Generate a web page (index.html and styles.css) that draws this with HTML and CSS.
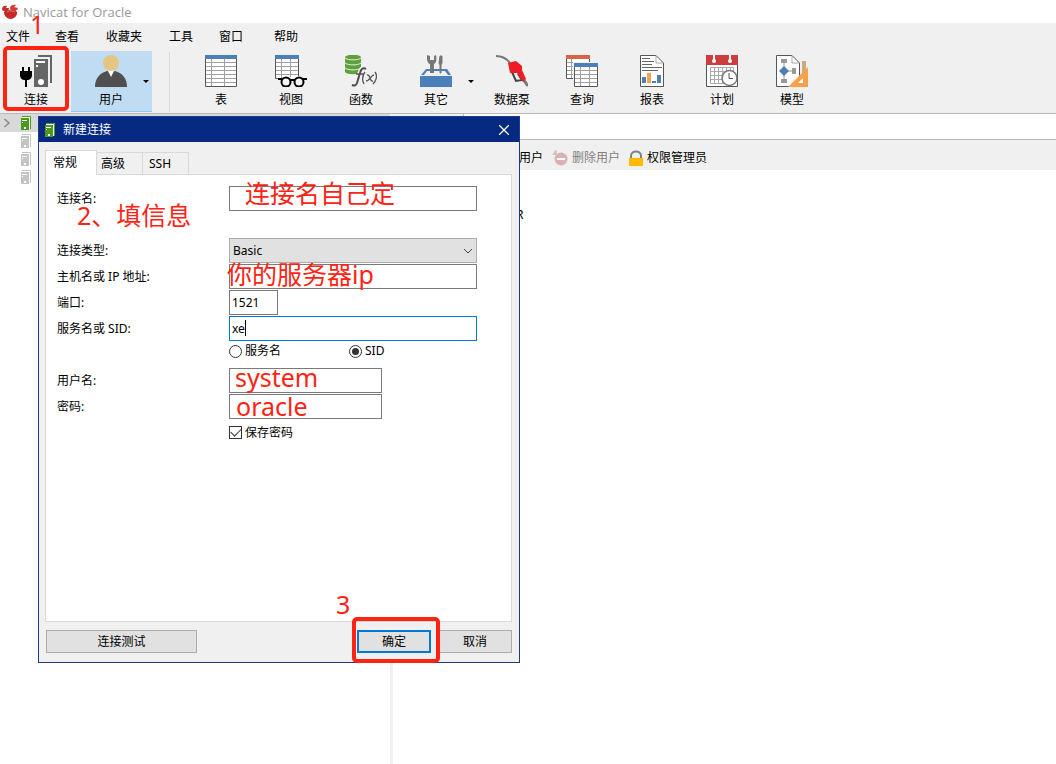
FILE: index.html
```html
<!DOCTYPE html>
<html lang="zh-CN">
<head>
  <meta charset="UTF-8">
  <meta name="viewport" content="width=device-width, initial-scale=1.0">
  <title>Navicat for Oracle</title>
  <link rel="stylesheet" href="styles.css">
</head>
<body>

<svg class="defs" width="0" height="0">
  <symbol id="server" viewBox="0 0 10 14">
    <path d="M1 0H10V13H8V14H0V2H1Z" fill="#fff"/>
    <path d="M1 .5H9.5V13" fill="none" stroke="currentColor"/>
    <path d="M0 2H8V14H0Z" fill="currentColor"/>
    <path d="M1 4.5H6M1 6.500H2" stroke="#fff"/>
    <path d="M3 11H5V13H3Z" fill="#fff"/>
  </symbol>
</svg>

<header class="titlebar">
  <svg width="16" height="16" viewBox="0 0 16 16">
    <path d="M0 5C0 2 3 1 5 2L4 4L7 4C7 7 4 8 2 7C1 7 0 6 0 5Z" fill="#c92c2c"/>
    <path d="M8 4C8 1 12 0 14 1L12 3L16 4C15 7 12 8 9 7Z" fill="#d53a36"/>
    <path d="M2 8C5 5 12 5 15 8C16 11 12 15 9 15C5 15 2 12 2 8Z" fill="#c62828"/>
    <path d="M5 8C8 6 11 7 13 8" fill="none" stroke="#e88078"/>
  </svg>
  <span>Navicat for Oracle</span>
</header>

<nav class="menu">
  <button>文件</button>
  <button>查看</button>
  <button>收藏夹</button>
  <button>工具</button>
  <button>窗口</button>
  <button>帮助</button>
</nav>

<div class="toolbar">
  <button class="tool">
    <svg width="32" height="32" viewBox="0 0 32 32">
      <path d="M2 12H4V16H8V12H10V16H12V20C12 23 10 25 7 25V32H5V25C2 25 0 23 0 20V16H2Z" fill="#000"/>
      <path d="M14 4H28V32H14Z" fill="#666"/>
      <path d="M18 1H31V28" fill="none" stroke="#666" stroke-width="2"/>
      <path d="M16 7H25M16 11H18" stroke="#fff" stroke-width="2"/>
      <circle cx="21" cy="27" r="3" fill="#fff"/>
    </svg>
    <span>连接</span>
  </button>
  <button class="tool split active">
    <svg width="32" height="32" viewBox="0 0 32 32">
      <path d="M0 32C0 23 5 18 12 16H20C27 18 32 23 32 32Z" fill="#505050"/>
      <path d="M12 14L16 22L20 14Z" fill="#fff"/>
      <circle cx="16" cy="8" r="8" fill="#e5c583"/>
    </svg>
    <span>用户</span>
  </button>
  <div class="separator"></div>
  <button class="tool">
    <svg width="32" height="32" viewBox="0 0 32 32">
      <path d="M.5 3.5H31.5V31.500H.5Z" fill="#fff" stroke="#555"/>
      <path d="M1 7.500H31M1 11.500H31M1 15.500H31M1 19.500H31M1 23.500H31M1 27.500H31M6.500 4V31M19.500 4V31" stroke="#a0a0a0"/>
      <path d="M0 0H32V4H0Z" fill="#4a7fb8"/>
    </svg>
    <span>表</span>
  </button>
  <button class="tool">
    <svg width="32" height="32" viewBox="0 0 32 32">
      <path d="M.5 3.500H23.500V23.500H.5Z" fill="#fff"/>
      <path d="M1 7.500H23M1 11.500H23M1 15.500H23M1 19.500H23M6.500 4V23M15.500 4V22" stroke="#a0a0a0"/>
      <path d="M.5 3V23.500H3M23.500 3V21" fill="none" stroke="#555"/>
      <path d="M0 0H24V4H0Z" fill="#4a7fb8"/>
      <path d="M3 24H7M15 25H20M28 24H32" stroke="#000" stroke-width="2"/>
      <circle cx="11" cy="27" r="4.500" fill="#f5f5f5" stroke="#000" stroke-width="2"/>
      <circle cx="24" cy="27" r="4.500" fill="#f5f5f5" stroke="#000" stroke-width="2"/>
    </svg>
    <span>视图</span>
  </button>
  <button class="tool">
    <svg width="32" height="32" viewBox="0 0 32 32">
      <path d="M0 2C2 -1 14 -1 16 2V17C14 20 2 20 0 17Z" fill="#5f9f3e"/>
      <path d="M0 3C3 5.500 13 5.500 16 3M0 8C3 10.500 13 10.500 16 8M0 13C3 15.500 13 15.500 16 13" fill="none" stroke="#e6f1df"/>
      <path d="M21 14C18 12 16 14 15 18L12 28C11 31 9 31 7 30" fill="none" stroke="#f0f0f0" stroke-width="5"/>
      <path d="M21 14C18 12 16 14 15 18L12 28C11 31 9 31 7 30" fill="none" stroke="#4c4c4c" stroke-width="2"/>
      <path d="M11 19H19M20 17C17 21 17 26 19 29M30 17C33 21 31 26 28 29M22 20C26 19 24 27 28 26M29 20C26 20 25 26 21 26" fill="none" stroke="#555" stroke-width="1.300"/>
    </svg>
    <span>函数</span>
  </button>
  <button class="tool split">
    <svg width="32" height="32" viewBox="0 0 32 32">
      <path d="M6 14H27L31 20H1Z" fill="#4a7fb8"/>
      <path d="M7 16H25L28 20H4Z" fill="#f0f0f0"/>
      <path d="M7 0V4C7 7 9 9 10 9V18H14V9C16 8 17 6 16 0L14 1V5H10V1Z" fill="#777"/>
      <path d="M20 1H22V8L21 10V18H20V10L19 8Z" fill="#777" stroke="#777"/>
      <path d="M0 21H32V32H0Z" fill="#4a7fb8"/>
    </svg>
    <span>其它</span>
  </button>
  <button class="tool">
    <svg width="32" height="32" viewBox="0 0 32 32">
      <path d="M0 1C7 1 11 4 14 8" fill="none" stroke="#777" stroke-width="2"/>
      <path d="M27 24L32 31" stroke="#777" stroke-width="3"/>
      <path d="M16 17L20 26L26 25L22 19" fill="none" stroke="#444" stroke-width="2"/>
      <path d="M12 8L20 6L26 11V15L30 24L27 27L21 18L14 18Z" fill="#ee1c24"/>
    </svg>
    <span>数据泵</span>
  </button>
  <button class="tool">
    <svg width="32" height="32" viewBox="0 0 32 32">
      <path d="M.5 3.500H23.500V23.500H.5Z" fill="#fff" stroke="#555"/>
      <path d="M1 7.500H23M1 11.500H23M1 15.500H23M1 19.500H23M5.500 4V23" stroke="#a0a0a0"/>
      <path d="M0 0H24V4H0Z" fill="#d96545"/>
      <path d="M7 7H32V32H7Z" fill="#f0f0f0"/>
      <path d="M8.500 11.500H31.500V31.500H8.500Z" fill="#fff" stroke="#555"/>
      <path d="M9 15.500H31M9 19.500H31M9 23.500H31M9 27.500H31M14.500 12V31M23.500 12V31" stroke="#a0a0a0"/>
      <path d="M8 8H32V12H8Z" fill="#4a7fb8"/>
    </svg>
    <span>查询</span>
  </button>
  <button class="tool">
    <svg width="32" height="32" viewBox="0 0 32 32">
      <path d="M4.500 .5H20L27.500 8V31.500H4.500Z" fill="#fff" stroke="#555"/>
      <path d="M20 .5V8H27.500" fill="none" stroke="#aaa"/>
      <path d="M6 3.500H14M6 6.500H18M6 9.500H16M6 12.500H26M6 15.500H22" stroke="#666"/>
      <path d="M6 22H10V28H6Z" fill="#4a7fb8"/>
      <path d="M11 18H15V28H11Z" fill="#f6a04c"/>
      <path d="M16 26H20V28H16ZM21 20H25V28H21Z" fill="#4a7fb8"/>
    </svg>
    <span>报表</span>
  </button>
  <button class="tool">
    <svg width="32" height="32" viewBox="0 0 32 32">
      <path d="M.5 1.500H31.500V31.500H.5Z" fill="#fff" stroke="#555"/>
      <path d="M0 0H32V10H0Z" fill="#cd3d3f"/>
      <path d="M8 0V5M24 0V5" stroke="#fff" stroke-width="2"/>
      <circle cx="8" cy="6" r="2" fill="#fff"/>
      <circle cx="24" cy="6" r="2" fill="#fff"/>
      <path d="M4.500 12.500H27.500V28.500H4.500ZM4 16.500H28M4 20.500H28M4 24.500H28M8.500 12V29M12.500 12V29M16.500 12V29M20.500 12V29M24.500 12V29" fill="none" stroke="#aaa"/>
      <circle cx="23.500" cy="23" r="7.500" fill="#fff" stroke="#777" stroke-width="1.500"/>
      <path d="M23 18V23.500H27" fill="none" stroke="#555"/>
    </svg>
    <span>计划</span>
  </button>
  <button class="tool">
    <svg width="32" height="32" viewBox="0 0 32 32">
      <path d="M.5 .5H16L23.500 8V31.500H.5Z" fill="#fff" stroke="#555"/>
      <path d="M16 .5V8H23.500" fill="none" stroke="#aaa"/>
      <path d="M5 4H11V8H5ZM16 13H20V19H16ZM5 24H11V28H5Z" fill="#999"/>
      <path d="M8 8V24M8 16H16" stroke="#999"/>
      <path d="M8 11L13 16L8 21L3 16Z" fill="#4a7fb8"/>
      <path d="M26 6H30V32H26Z" fill="#c9ab78"/>
      <path d="M32 12V32H12Z" fill="#f9a04a"/>
      <path d="M27 23V28H22Z" fill="#fff"/>
    </svg>
    <span>模型</span>
  </button>
</div>

<main class="workspace">
  <aside class="sidebar">
    <ul class="tree">
      <li class="selected">
        <svg class="expander" width="8" height="10" viewBox="0 0 8 10"><path d="M1.500 1L6 5L1.500 9" fill="none" stroke="#888" stroke-width="1.500"/></svg>
        <svg class="node" width="10" height="14"><use href="#server"/></svg>
      </li>
      <li><svg class="node" width="10" height="14"><use href="#server"/></svg></li>
      <li><svg class="node" width="10" height="14"><use href="#server"/></svg></li>
      <li><svg class="node" width="10" height="14"><use href="#server"/></svg></li>
    </ul>
  </aside>
  <section class="content">
    <div class="tabstrip"><div class="tabstrip-tab"></div></div>
    <div class="actions">
      <button>用户</button>
      <button disabled>
        <svg width="16" height="16" viewBox="0 0 16 16">
          <path d="M0 5L2 2L3 0L5 1V5Z" fill="#ccc8bd"/>
          <circle cx="9" cy="9" r="6.500" fill="#d9b3b3"/>
          <path d="M5 9H13" stroke="#fff" stroke-width="2"/>
        </svg>
        删除用户
      </button>
      <button>
        <svg width="14" height="16" viewBox="0 0 14 16">
          <path d="M2 8V6C2 0 12 0 12 6V8" fill="none" stroke="#808080" stroke-width="2"/>
          <path d="M0 8H14V16H0Z" fill="#ffb900"/>
        </svg>
        权限管理员
      </button>
    </div>
    <div class="objects">R</div>
  </section>
</main>

<div class="dialog" role="dialog" aria-labelledby="dialog-title">
  <div class="dialog-title">
    <svg width="10" height="14"><use href="#server"/></svg>
    <span id="dialog-title">新建连接</span>
    <button class="close" aria-label="关闭">
      <svg width="10" height="10" viewBox="0 0 10 10"><path d="M0 0L10 10M10 0L0 10" stroke="#fff" stroke-width="1.300"/></svg>
    </button>
  </div>
  <form class="dialog-body">
    <div class="tabs" role="tablist">
      <button type="button" class="tab current" role="tab">常规</button>
      <button type="button" class="tab" role="tab">高级</button>
      <button type="button" class="tab" role="tab">SSH</button>
    </div>
    <div class="panel">
      <div class="row">
        <label for="name">连接名:</label>
        <input type="text" id="name" class="field">
      </div>
      <div class="row"></div>
      <div class="row">
        <label for="type">连接类型:</label>
        <div class="select">
          <select id="type"><option>Basic</option></select>
          <svg class="arrow" width="10" height="6" viewBox="0 0 10 6"><path d="M1 1L5 5L9 1" fill="none" stroke="#444"/></svg>
        </div>
      </div>
      <div class="row">
        <label for="host">主机名或 IP 地址:</label>
        <input type="text" id="host" class="field">
      </div>
      <div class="row">
        <label for="port">端口:</label>
        <input type="text" id="port" class="field port" value="1521">
      </div>
      <div class="row">
        <label for="sid">服务名或 SID:</label>
        <div class="focused">
          <input type="text" id="sid" class="field" value="xe">
          <span class="caret"></span>
        </div>
      </div>
      <div class="row options">
        <label class="option"><input type="radio" name="kind">服务名</label>
        <label class="option"><input type="radio" name="kind" checked>SID</label>
      </div>
      <div class="row">
        <label for="user">用户名:</label>
        <input type="text" id="user" class="field short">
      </div>
      <div class="row">
        <label for="password">密码:</label>
        <input type="password" id="password" class="field short">
      </div>
      <div class="row">
        <label class="option save"><input type="checkbox" checked>保存密码</label>
      </div>
    </div>
    <div class="buttons">
      <button type="button" class="btn test">连接测试</button>
      <button type="button" class="btn default">确定</button>
      <button type="button" class="btn">取消</button>
    </div>
  </form>
</div>

<!-- tutorial notes on top of the window -->
<div class="note box box-connect"></div>
<div class="note box box-ok"></div>
<div class="note note-1">1</div>
<div class="note note-2">2、填信息</div>
<div class="note note-3">3</div>
<div class="note note-name">连接名自己定</div>
<div class="note note-host">你的服务器ip</div>
<div class="note note-user">system</div>
<div class="note note-password">oracle</div>

</body>
</html>
```
FILE: styles.css
```css
* {
  box-sizing: border-box;
}

body {
  margin: 0;
  min-height: 100vh;
  display: flex;
  flex-direction: column;
  position: relative;
  background-color: #fff;
  color: #000;
  font-family: "Noto Sans", "Noto Sans CJK SC", sans-serif;
  font-size: 12px;
  line-height: 16px;
}

button,
input,
select {
  font: inherit;
  color: inherit;
}

button {
  padding: 0;
  border: none;
  background: none;
}

svg {
  display: block;
  flex: none;
}

.defs {
  position: absolute;
}

.titlebar {
  display: flex;
  align-items: center;
  gap: 5px;
  height: 23px;
  padding-left: 2px;
  color: #999;
  font-family: "Open Sans", sans-serif;
  font-size: 13px;
}

.menu {
  display: grid;
  grid-template-columns: 49px 51px 63px 50px 55px auto;
  height: 25px;
  padding: 2px 0 0 6px;
  background-color: #f0f0f0;
}

.menu button {
  text-align: left;
}

/* main toolbar */
.toolbar {
  display: flex;
  height: 66px;
  padding: 3px 0 1px 1px;
  background-color: #f0f0f0;
  border-bottom: 1px solid #b9b9b9;
}

.tool {
  display: flex;
  flex-direction: column;
  align-items: center;
  gap: 5px;
  width: 70px;
  padding-top: 4px;
}

.tool.split {
  position: relative;
  width: 81px;
  padding-right: 1px;
}

.tool.split::after {
  content: "";
  position: absolute;
  right: 3px;
  top: 29px;
  border: 3px solid transparent;
  border-top-color: #000;
  border-bottom: none;
}

.tool.active {
  background-color: #c0dcf3;
  border-bottom: 1px solid #90c8f6;
}

.separator {
  width: 34px;
  padding: 1px 0 0 17px;
}

.separator::before {
  content: "";
  display: block;
  width: 1px;
  height: 100%;
  background-color: #d9d9d9;
}

.workspace {
  flex: 1;
  display: grid;
  grid-template-columns: 393px 1fr;
}

.sidebar {
  border-right: 3px solid #f0f0f0;
}

.tree {
  margin: 0;
  padding: 0;
  list-style: none;
}

.tree li {
  display: flex;
  align-items: center;
  justify-content: flex-end;
  gap: 10px;
  height: 18px;
  padding-right: 359px;
}

.tree .selected {
  background-color: #d9d9d9;
}

.node {
  color: #c4c4c4;
}

.selected .node,
.dialog-title svg {
  color: #4a9a1c;
}

.tabstrip {
  height: 26px;
  border-bottom: 1px solid #b9b9b9;
}

.tabstrip-tab {
  width: 71px;
  height: 25px;
  background-color: #f0f0f0;
  border-right: 1px solid #b9b9b9;
}

.actions {
  display: flex;
  align-items: center;
  gap: 9px;
  height: 30px;
  padding: 5px 0 0 126px;
  background-color: #f0f0f0;
}

.actions button {
  display: flex;
  align-items: center;
  gap: 4px;
}

.actions button:disabled {
  color: #808080;
}

.objects {
  padding: 37px 0 0 123px;
}

/* new connection dialog */
.dialog {
  position: absolute;
  left: 38px;
  top: 116px;
  width: 482px;
  background-color: #f0f0f0;
  border: 1px solid #1c3a86;
}

.dialog-title {
  display: flex;
  align-items: center;
  gap: 8px;
  height: 25px;
  padding: 0 10px 0 6px;
  background-color: #062a82;
  color: #fff;
}

.dialog-title .close {
  margin-left: auto;
}

.dialog-body {
  padding: 8px 7px 9px 6px;
}

.tabs {
  display: flex;
  align-items: flex-end;
  height: 24px;
}

.tab {
  width: 46px;
  height: 22px;
  padding-left: 4px;
  text-align: left;
  border: 1px solid #d9d9d9;
  border-left: none;
  border-bottom: none;
}

.tab:last-child {
  padding-left: 6px;
}

.tab.current {
  position: relative;
  width: 52px;
  height: 25px;
  margin-bottom: -1px;
  padding-left: 7px;
  background-color: #fff;
  border-left: 1px solid #d9d9d9;
}

.panel {
  display: grid;
  grid-auto-rows: 25px;
  gap: 1px;
  min-height: 448px;
  padding: 11px;
  align-content: start;
  background-color: #fff;
  border: 1px solid #d9d9d9;
}

.row {
  display: grid;
  grid-template-columns: 172px 248px;
  align-items: center;
}

.field,
.select select {
  width: 100%;
  height: 25px;
  padding: 0 3px;
  background-color: #fff;
  border: 1px solid #7a7a7a;
  border-radius: 0;
  outline: none;
}

.field {
  padding: 0 2px;
}

.port {
  width: 49px;
}

.short {
  width: 153px;
}

.select,
.focused {
  position: relative;
}

.select select {
  appearance: none;
  background-color: #e1e1e1;
  border-color: #adadad;
}

.select .arrow {
  position: absolute;
  right: 4px;
  top: 10px;
  pointer-events: none;
}

.focused .field {
  border-color: #0078d7;
}

.caret {
  position: absolute;
  left: 16px;
  top: 4px;
  width: 1px;
  height: 16px;
  background-color: #000;
}

.options {
  grid-template-columns: 120px 1fr;
  padding-left: 172px;
  align-items: start;
}

.option {
  display: flex;
  align-items: center;
  gap: 3px;
  line-height: 18px;
}

.save {
  grid-column: 2;
}

.option input {
  appearance: none;
  display: grid;
  place-items: center;
  width: 13px;
  height: 13px;
  margin: 0;
  background-color: #fff;
  border: 1px solid #333;
}

.option input[type="radio"] {
  border-radius: 50%;
}

.option input[type="radio"]:checked::before {
  content: "";
  width: 7px;
  height: 7px;
  border-radius: 50%;
  background-color: #333;
}

.option input[type="checkbox"]:checked::before {
  content: "";
  width: 9px;
  height: 5px;
  margin-bottom: 3px;
  border-left: 1px solid #333;
  border-bottom: 1px solid #333;
  transform: rotate(-45deg);
}

.buttons {
  display: flex;
  gap: 7px;
  padding: 8px 0 0 1px;
}

.btn {
  width: 74px;
  height: 23px;
  background-color: #e1e1e1;
  border: 1px solid #adadad;
}

.btn.test {
  width: 151px;
  margin-right: auto;
}

.btn.default {
  border: 2px solid #0078d7;
}

/* red notes */
.note {
  position: absolute;
  color: #ff2314;
  font-size: 25px;
  line-height: 28px;
  white-space: nowrap;
  pointer-events: none;
}

.box {
  border: 4px solid #ff2314;
  border-radius: 5px;
}

.box-connect {
  left: 3px;
  top: 46px;
  width: 66px;
  height: 65px;
}

.box-ok {
  left: 352px;
  top: 617px;
  width: 88px;
  height: 46px;
}

.note-1 {
  left: 30px;
  top: 10px;
}

.note-2 {
  left: 77px;
  top: 201px;
}

.note-3 {
  left: 336px;
  top: 590px;
}

.note-name {
  left: 245px;
  top: 179px;
}

.note-host {
  left: 227px;
  top: 260px;
}

.note-user {
  left: 235px;
  top: 363px;
}

.note-password {
  left: 236px;
  top: 392px;
}
```
